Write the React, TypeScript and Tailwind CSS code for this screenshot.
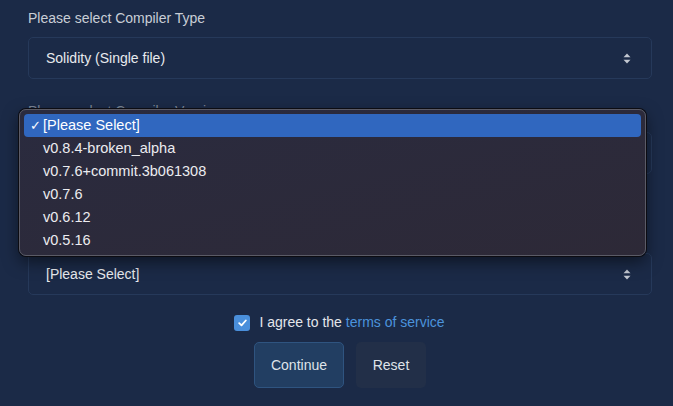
import React from "react";

function Arrows() {
  return (
    <svg width="8" height="11" viewBox="0 0 8 11" className="shrink-0">
      <path d="M4 0.5 L7.5 4.2 L0.5 4.2 Z" fill="#c3c8d1" />
      <path d="M4 10.5 L7.5 6.8 L0.5 6.8 Z" fill="#c3c8d1" />
    </svg>
  );
}

function Select({ value }: { value: string }) {
  return (
    <div className="flex h-[42px] items-center justify-between rounded-[5px] border border-[#26395a] bg-[#1b2a47] pl-[17px] pr-[20px] text-[14px] text-[#e8eaee]">
      <span>{value}</span>
      <Arrows />
    </div>
  );
}

const items = [
  "[Please Select]",
  "v0.8.4-broken_alpha",
  "v0.7.6+commit.3b061308",
  "v0.7.6",
  "v0.6.12",
  "v0.5.16",
];

export default function App() {
  return (
    <div
      className="relative h-[406px] w-[673px] overflow-hidden bg-[#1b2a47]"
      style={{ fontFamily: '"Liberation Sans", Arial, sans-serif' }}
    >
      <div className="flex flex-col pl-[28px] pr-[21px] pt-[8px]">
        <div className="h-[20px] text-[14px] leading-[20px] text-[#c9ced6]">Please select Compiler Type</div>
        <div className="mt-[9px]">
          <Select value="Solidity (Single file)" />
        </div>
        <div className="mt-[22px] h-[20px] text-[14px] leading-[20px] text-[#7d8797]">Please select Compiler Version</div>
        <div className="mt-[11px]">
          <Select value="[Please Select]" />
        </div>
        <div className="h-[79px]" />
        <div>
          <Select value="[Please Select]" />
        </div>
        <div className="mt-[17px] flex items-center justify-center gap-[9px] pr-[1px] text-[14px] text-[#e3e6eb]">
          <div className="flex h-[16px] w-[16px] items-center justify-center rounded-[3px] bg-[#4a8fdb]">
            <svg width="9" height="8" viewBox="0 0 9 8">
              <path d="M1.2 4.2 L3.5 6.4 L7.8 1.5" fill="none" stroke="#ffffff" strokeWidth="1.8" strokeLinecap="round" strokeLinejoin="round" />
            </svg>
          </div>
          <span>
            I agree to the <span className="text-[#4b93dc]">terms of service</span>
          </span>
        </div>
        <div className="mt-[9px] flex justify-center gap-[12px]">
          <div className="flex h-[46px] w-[90px] items-center justify-center rounded-[5px] border border-[#2f5480] bg-[#223e62] text-[14px] text-[#dfe3e9]">
            Continue
          </div>
          <div className="flex h-[46px] w-[70px] items-center justify-center rounded-[5px] bg-[#222f48] text-[14px] text-[#dfe3e9]">
            Reset
          </div>
        </div>
      </div>

      <div className="absolute left-[19px] top-[109px] w-[627px] rounded-[7px] border border-[#5b5b66] bg-gradient-to-br from-[#2a2b3f] to-[#2d2937] px-[4px] pb-[3px] pt-[4px] shadow-[0_0_0_1px_#0c0c12,0_6px_16px_rgba(0,0,0,0.5)]">
        {items.map((it, i) => (
          <div
            key={it}
            className={
              i === 0
                ? "flex h-[23px] items-center rounded-[4px] bg-[#3067bf] pl-[6px] text-[14.5px] text-white"
                : "flex h-[23px] items-center pl-[6px] text-[14.5px] text-[#ececf0]"
            }
          >
            <span className="w-[13px] text-[13px]">{i === 0 ? "✓" : ""}</span>
            <span>{it}</span>
          </div>
        ))}
      </div>
    </div>
  );
}
